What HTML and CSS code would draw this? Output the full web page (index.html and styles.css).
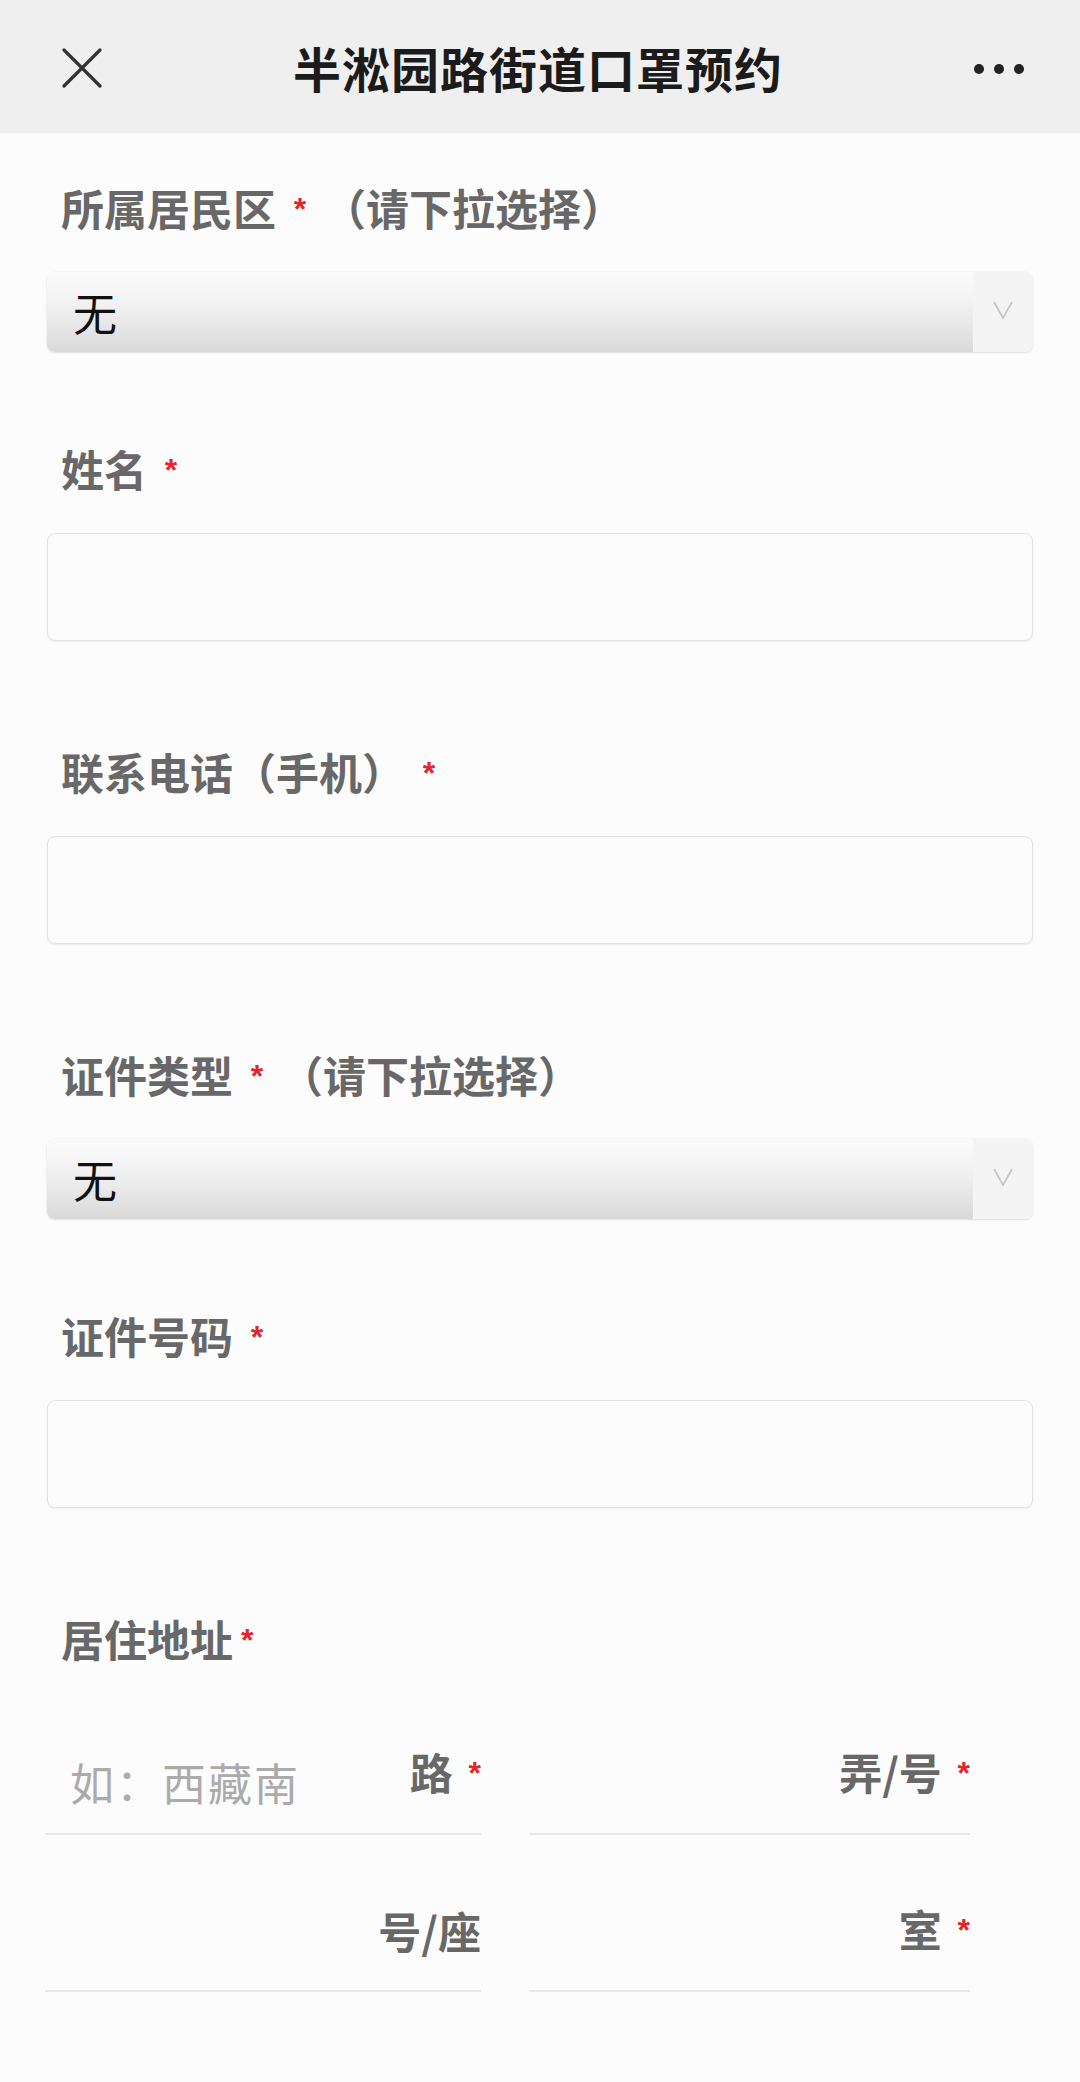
FILE: index.html
```html
<!DOCTYPE html>
<html lang="zh-CN">
<head>
<meta charset="utf-8">
<title>半淞园路街道口罩预约</title>
<link rel="stylesheet" href="styles.css">
</head>
<body>
<header class="topbar">
  <span class="topbar-close" aria-label="关闭">
    <svg width="40" height="40" viewBox="0 0 40 40"><path d="M2 2 L38 38 M38 2 L2 38" stroke="#333" stroke-width="3.2" stroke-linecap="round" fill="none"/></svg>
  </span>
  <h1 class="topbar-title">半淞园路街道口罩预约</h1>
  <span class="topbar-more" aria-label="更多">
    <i class="dot"></i><i class="dot"></i><i class="dot"></i>
  </span>
</header>

<main class="form">
  <div class="field field-select">
    <div class="label">所属居民区 <span class="req req-mid">*</span> （请下拉选择）</div>
    <div class="select">
      <span class="select-value">无</span>
      <span class="select-arrow"><svg width="22" height="20" viewBox="0 0 22 20"><path d="M2 2 L11 18 L20 2" stroke="#c4c4c4" stroke-width="1.6" fill="none"/></svg></span>
    </div>
  </div>

  <div class="field">
    <div class="label">姓名 <span class="req">*</span></div>
    <input class="text-input" type="text">
  </div>

  <div class="field">
    <div class="label">联系电话（手机） <span class="req">*</span></div>
    <input class="text-input" type="tel">
  </div>

  <div class="field field-select">
    <div class="label">证件类型 <span class="req req-mid">*</span> （请下拉选择）</div>
    <div class="select">
      <span class="select-value">无</span>
      <span class="select-arrow"><svg width="22" height="20" viewBox="0 0 22 20"><path d="M2 2 L11 18 L20 2" stroke="#c4c4c4" stroke-width="1.6" fill="none"/></svg></span>
    </div>
  </div>

  <div class="field">
    <div class="label">证件号码 <span class="req">*</span></div>
    <input class="text-input" type="text">
  </div>

  <div class="field field-address">
    <div class="label">居住地址<span class="req">*</span></div>
    <div class="address-grid">
      <div class="addr-cell">
        <input class="addr-input" type="text" placeholder="如：西藏南">
        <span class="addr-label">路 <span class="req">*</span></span>
      </div>
      <div class="addr-cell">
        <input class="addr-input" type="text">
        <span class="addr-label">弄/号 <span class="req">*</span></span>
      </div>
      <div class="addr-cell">
        <input class="addr-input" type="text">
        <span class="addr-label">号/座</span>
      </div>
      <div class="addr-cell">
        <input class="addr-input" type="text">
        <span class="addr-label">室 <span class="req">*</span></span>
      </div>
    </div>
  </div>
</main>
</body>
</html>
```

FILE: styles.css
```css
* { box-sizing: border-box; }

html, body {
  margin: 0;
  padding: 0;
  background: #fdfcfd;
  font-family: "Noto Sans CJK SC", "Noto Sans", sans-serif;
}

.topbar {
  height: 133px;
  background: #efefef;
  display: flex;
  align-items: center;
  justify-content: space-between;
  padding: 0 36px 0 62px;
}

.topbar-close {
  display: flex;
  width: 40px;
  height: 40px;
  margin-top: 2px;
}

.topbar-title {
  margin: 0;
  font-size: 48px;
  font-weight: 700;
  color: #1b1b1b;
  letter-spacing: 1px;
  line-height: 60px;
}

.topbar-more {
  display: flex;
  gap: 10px;
  width: 70px;
  align-items: center;
  margin-top: 4px;
}

.dot {
  width: 10px;
  height: 10px;
  border-radius: 50%;
  background: #222;
  display: block;
}

.form {
  padding: 51px 47px 40px 47px;
}

.field {
  display: flex;
  flex-direction: column;
  gap: 38px;
  margin-bottom: 107px;
}

.field-select {
  margin-bottom: 93px;
}

.label {
  height: 50px;
  line-height: 46px;
  padding-left: 14px;
  font-size: 43px;
  font-weight: 700;
  color: #686868;
  white-space: pre;
}

.req {
  color: #e3262a;
  font-family: "Liberation Sans", sans-serif;
  font-weight: 700;
  font-size: 32px;
  vertical-align: 6px;
  margin-left: 8px;
}

.req-mid {
  margin-right: 7px;
}

.select {
  height: 80px;
  display: flex;
  border-radius: 8px;
  overflow: hidden;
  box-shadow: 0 1px 2px rgba(0, 0, 0, 0.10), 0 0 0 1px rgba(0, 0, 0, 0.02);
}

.select-value {
  flex: 1;
  display: flex;
  align-items: center;
  padding-left: 26px;
  font-size: 44px;
  color: #111;
  background: linear-gradient(to bottom, #fbfbfb 0%, #f0f0f0 45%, #d9d9d9 100%);
}

.select-arrow {
  width: 60px;
  display: flex;
  align-items: center;
  justify-content: center;
  background: #f4f4f5;
  padding-bottom: 4px;
}

.text-input {
  display: block;
  width: 100%;
  height: 108px;
  border: 1px solid #e3e3e3;
  border-radius: 8px;
  background: #fdfcfd;
  box-shadow: 0 1px 2px rgba(0, 0, 0, 0.06);
  font-size: 44px;
  font-family: inherit;
  padding: 0 24px;
  outline: none;
}

.field-address {
  gap: 13px;
  margin-bottom: 0;
}

.address-grid {
  display: grid;
  grid-template-columns: 436px 441px;
  column-gap: 48px;
  margin-left: -2px;
}

.addr-cell {
  height: 157px;
  display: flex;
  align-items: flex-end;
  border-bottom: 2px solid #e8e8ea;
  padding-bottom: 35px;
}

.addr-input {
  flex: 1;
  min-width: 0;
  border: none;
  background: transparent;
  height: 60px;
  padding: 0 0 0 25px;
  font-family: inherit;
  font-size: 44px;
  letter-spacing: 2px;
  color: #333;
  outline: none;
  margin-bottom: -14px;
}

.addr-input::placeholder {
  color: #ababab;
}

.addr-label {
  font-size: 43px;
  font-weight: 700;
  color: #686868;
  line-height: 50px;
  white-space: pre;
}

.addr-label .req {
  margin-left: 6px;
}
```
